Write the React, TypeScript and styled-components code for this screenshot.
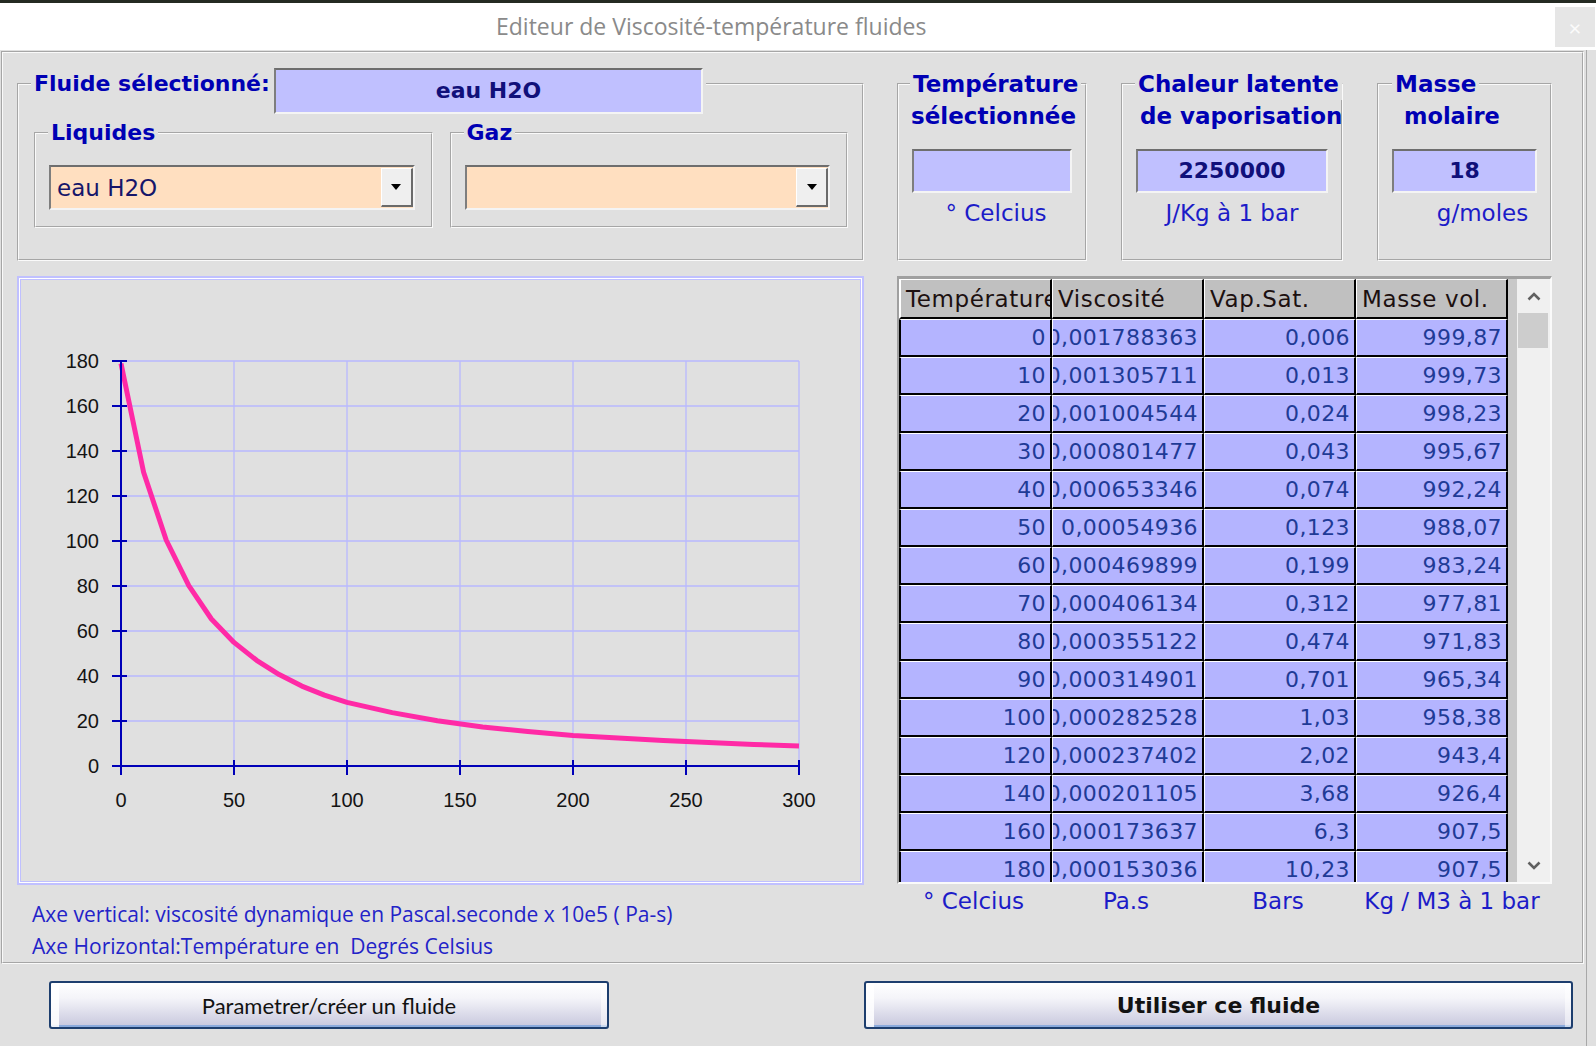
import React from "react";
import styled, { createGlobalStyle } from "styled-components";

const GlobalStyle = createGlobalStyle`
  html, body {
    margin: 0;
    padding: 0;
    background: #e0e0e0;
  }
  body {
    width: 1596px;
    height: 1046px;
    overflow: hidden;
    font-family: "DejaVu Sans", "Liberation Sans", sans-serif;
  }
  * {
    box-sizing: border-box;
  }
`;

const ui = `"Lato", "Open Sans", sans-serif`;
const open = `"Open Sans", "Lato", sans-serif`;
const dv = `"DejaVu Sans", "Liberation Sans", sans-serif`;

const Window = styled.div`
  width: 1596px;
  height: 1046px;
  display: flex;
  flex-direction: column;
  background: #e0e0e0;
`;

const TopStrip = styled.div`
  height: 3px;
  background: #242a22;
`;

const TitleBar = styled.header`
  height: 47px;
  display: flex;
  align-items: flex-start;
  background: #ffffff;
`;

const Title = styled.h1`
  flex: 1;
  margin: 0;
  padding-left: 496px;
  font: 400 23px/47px ${open};
  color: #8a8a8a;
`;

const CloseButton = styled.div`
  width: 40px;
  height: 40px;
  margin: 4px 1px 0 0;
  display: flex;
  align-items: center;
  justify-content: center;
  background: #e6e6e6;
  color: #fbfbfb;
  font: 22px ${ui};
`;

const Client = styled.div`
  flex: 1;
  background: linear-gradient(90deg, transparent 1586px, #a8a8a8 1586px, #a8a8a8 1587px, transparent 1587px);
`;

const Panel = styled.main`
  height: 913px;
  margin: 1px 12px 0 1px;
  padding: 15px 30px 0 14px;
  border: 2px groove #fafafa;
  background: #e0e0e0;
  display: grid;
  grid-template-columns: 847px 655px;
  grid-template-rows: 193px 609px auto;
  column-gap: 33px;
  row-gap: 15px;
`;

const Frame = styled.fieldset<{ $w?: number; $h: number; $pad?: string }>`
  margin: 0;
  min-width: 0;
  height: ${(p) => p.$h}px;
  ${(p) => (p.$w ? `width: ${p.$w}px; flex: none;` : "flex: 1;")}
  padding: ${(p) => p.$pad ?? "0 13px"};
  border: 2px groove #fafafa;
  display: flex;
  flex-direction: column;
`;

const Legend = styled.legend<{ $shift?: number; $size?: number }>`
  padding: 0 3px;
  margin-left: ${(p) => p.$shift ?? 0}px;
  font: bold ${(p) => p.$size ?? 22}px/32px ${dv};
  color: #0000b4;
  white-space: pre;
`;

const FluideLegend = styled(Legend)`
  display: flex;
  align-items: flex-start;
`;

const FluideLabel = styled.span`
  width: 240px;
`;

const SecondLine = styled.div<{ $indent: number; $size?: number }>`
  margin-left: ${(p) => p.$indent - 15}px;
  font: bold ${(p) => p.$size ?? 22}px/32px ${dv};
  color: #0000b4;
  white-space: pre;
`;

const ValueField = styled.div<{ $w?: number; $h: number }>`
  ${(p) => (p.$w ? `width: ${p.$w}px;` : "")}
  height: ${(p) => p.$h}px;
  background: #c0c0ff;
  border-style: solid;
  border-width: 2px;
  border-color: #6e6e6e #f4f4f4 #f4f4f4 #7e7e7e;
  font: bold 22px/${(p) => p.$h - 4}px ${dv};
  color: #10107a;
  text-align: center;
`;

const HeaderField = styled(ValueField)`
  margin-bottom: -14px;
`;

const InputField = styled(ValueField)`
  margin-top: 17px;
`;

const Unit = styled.div<{ $shift?: number }>`
  margin-top: 5px;
  padding-left: ${(p) => p.$shift ?? 0}px;
  font: 23px/30px ${dv};
  color: #1c1cc8;
  text-align: center;
  white-space: nowrap;
`;

const SubRow = styled.div`
  display: flex;
  gap: 17px;
`;

const Combo = styled.div`
  height: 45px;
  padding: 1px 0;
  display: flex;
  align-items: center;
  background: #ffdfc0;
  border-style: solid;
  border-width: 2px;
  border-color: #6e6e6e #f4f4f4 #f4f4f4 #7e7e7e;
`;

const ComboText = styled.span`
  flex: 1;
  padding-left: 6px;
  font: 23px ${dv};
  color: #16166a;
`;

const DropButton = styled.div`
  width: 32px;
  height: 39px;
  display: flex;
  align-items: center;
  justify-content: center;
  background: #efefef;
  border-top: 1px solid #ffffff;
  border-left: 1px solid #ffffff;
  border-right: 2px solid #6a6a6a;
  border-bottom: 2px solid #6a6a6a;
`;

const RightFrames = styled.div`
  display: flex;
  gap: 34px;
`;

const ChartFrame = styled.div`
  border: 2px solid #c0c0ff;
  box-shadow: inset 0 0 0 1px #ffffff, inset 0 0 0 2px #c0c0ff;
`;

const TableBox = styled.div`
  height: 608px;
  display: flex;
  border-style: solid;
  border-width: 3px 2px 2px 2px;
  border-color: #a0a0a0 #fafafa #fafafa #a0a0a0;
  overflow: hidden;
`;

const GridArea = styled.div`
  flex: 1;
  background: #c8c8c8;
  overflow: hidden;
`;

const GridRow = styled.div<{ $head?: boolean }>`
  display: grid;
  grid-template-columns: 153px 152px 152px 152px;
  height: ${(p) => (p.$head ? 40 : 38)}px;
`;

const Cell = styled.div<{ $head?: boolean; $first?: boolean }>`
  display: flex;
  align-items: center;
  justify-content: ${(p) => (p.$head ? "flex-start" : "flex-end")};
  overflow: hidden;
  white-space: pre;
  padding: ${(p) => (p.$head ? "0 0 0 5px" : "0 4px 0 0")};
  background: ${(p) => (p.$head ? "#c0c0c0" : "#b4b4ff")};
  border-top: 1px solid #ffffff;
  border-left: ${(p) =>
    p.$first ? (p.$head ? "2px solid #ffffff" : "2px solid #000000") : "1px solid #ffffff"};
  border-right: 2px solid #000000;
  border-bottom: 2px solid #000000;
  font: ${(p) => (p.$head ? "23px" : "22px")} ${dv};
  letter-spacing: ${(p) => (p.$head ? "0.6px" : "0.4px")};
  color: ${(p) => (p.$head ? "#1c1010" : "#1f3b96")};
`;

const Scrollbar = styled.div`
  width: 33px;
  display: flex;
  flex-direction: column;
  background: #f0f0f0;
`;

const ScrollArrow = styled.div`
  height: 34px;
  display: flex;
  align-items: center;
  justify-content: center;
`;

const ScrollThumb = styled.div`
  height: 35px;
  margin: 0 2px 0 1px;
  background: #cdcdcd;
`;

const ScrollTrack = styled.div`
  flex: 1;
`;

const Notes = styled.div`
  margin-top: -2px;
  padding-left: 15px;
  font: 21px/32px ${open};
  color: #2323c8;
  white-space: pre;
`;

const Units = styled.div`
  display: grid;
  grid-template-columns: 153px 152px 152px 196px;
  margin-top: -14px;
`;

const UnitCell = styled.div`
  font: 23px/30px ${dv};
  color: #1c1cc8;
  text-align: center;
  white-space: nowrap;
`;

const ButtonRow = styled.footer`
  display: flex;
  padding: 17px 0 0 49px;
  gap: 255px;
`;

const Button = styled.button<{ $w: number; $bold?: boolean }>`
  width: ${(p) => p.$w}px;
  height: 48px;
  padding: 0;
  border: 2px solid #1d3e6e;
  border-radius: 3px;
  background: linear-gradient(#ffffff 0%, #f4f4f9 35%, #c7c7dd 100%);
  box-shadow: inset 9px 0 0 -1px rgba(255, 255, 255, 0.85),
    inset -7px 0 0 -1px rgba(255, 255, 255, 0.55), inset 0 -2px 0 #8aaadc;
  font: ${(p) => (p.$bold ? `bold 22px ${dv}` : `400 22px ${ui}`)};
  color: #121212;
`;

const rows: string[][] = [
  ["0", "0,001788363", "0,006", "999,87"],
  ["10", "0,001305711", "0,013", "999,73"],
  ["20", "0,001004544", "0,024", "998,23"],
  ["30", "0,000801477", "0,043", "995,67"],
  ["40", "0,000653346", "0,074", "992,24"],
  ["50", " 0,00054936", "0,123", "988,07"],
  ["60", "0,000469899", "0,199", "983,24"],
  ["70", "0,000406134", "0,312", "977,81"],
  ["80", "0,000355122", "0,474", "971,83"],
  ["90", "0,000314901", "0,701", "965,34"],
  ["100", "0,000282528", "1,03", "958,38"],
  ["120", "0,000237402", "2,02", "943,4"],
  ["140", "0,000201105", "3,68", "926,4"],
  ["160", "0,000173637", "6,3", "907,5"],
  ["180", "0,000153036", "10,23", "907,5"],
];

const headers = ["Température", "Viscosité", "Vap.Sat.", "Masse vol."];

// viscosity x 1e5 against temperature, last points extend the table
const curve: [number, number][] = [
  ...rows.map((r) => [Number(r[0]), Number(r[1].trim().replace(",", ".")) * 1e5] as [number, number]),
  [200, 13.6],
  [220, 12.4],
  [240, 11.3],
  [260, 10.4],
  [280, 9.6],
  [300, 8.9],
];

const X0 = 102;
const Y0 = 488;
const px = (t: number) => X0 + t * (678 / 300);
const py = (v: number) => Y0 - v * 2.25;

const Chart = () => {
  const yTicks = [0, 20, 40, 60, 80, 100, 120, 140, 160, 180];
  const xTicks = [0, 50, 100, 150, 200, 250, 300];
  const path = curve.map(([t, v], i) => `${i ? "L" : "M"}${px(t).toFixed(1)},${py(v).toFixed(1)}`).join(" ");
  return (
    <svg width="843" height="605" viewBox="0 0 843 605" style={{ display: "block" }}>
      <g stroke="#b8b8ff" strokeWidth="1.3">
        {xTicks.slice(1).map((t) => (
          <line key={t} x1={px(t)} y1={py(180)} x2={px(t)} y2={Y0} />
        ))}
        {yTicks.slice(1).map((v) => (
          <line key={v} x1={X0} y1={py(v)} x2={px(300)} y2={py(v)} />
        ))}
      </g>
      <path d={path} fill="none" stroke="#ff2aa6" strokeWidth="5" strokeLinejoin="round" />
      <g stroke="#0000b8" strokeWidth="2">
        <line x1={X0} y1={py(180)} x2={X0} y2={Y0} />
        <line x1={X0} y1={Y0} x2={px(300)} y2={Y0} />
        {yTicks.map((v) => (
          <line key={v} x1={93} y1={py(v)} x2={108} y2={py(v)} />
        ))}
        {xTicks.map((t) => (
          <line key={t} x1={px(t)} y1={482} x2={px(t)} y2={497} />
        ))}
      </g>
      <g fontFamily='"Liberation Sans", Arial, sans-serif' fontSize="20" fill="#141414">
        {yTicks.map((v) => (
          <text key={v} x={80} y={py(v) + 7} textAnchor="end">
            {v}
          </text>
        ))}
        {xTicks.map((t) => (
          <text key={t} x={px(t)} y={529} textAnchor="middle">
            {t}
          </text>
        ))}
      </g>
    </svg>
  );
};

const Triangle = () => (
  <svg width="10" height="6" viewBox="0 0 10 6">
    <polygon points="0,0 10,0 5,6" fill="#000" />
  </svg>
);

const Chevron = ({ up }: { up?: boolean }) => (
  <svg width="14" height="9" viewBox="0 0 14 9">
    <polyline
      points={up ? "1.5,7.5 7,2 12.5,7.5" : "1.5,1.5 7,7 12.5,1.5"}
      fill="none"
      stroke="#606060"
      strokeWidth="2.6"
    />
  </svg>
);

export default function App() {
  return (
    <>
      <GlobalStyle />
      <Window>
        <TopStrip />
        <TitleBar>
          <Title>Editeur de Viscosité-température fluides</Title>
          <CloseButton>×</CloseButton>
        </TitleBar>
        <Client>
          <Panel>
            <Frame $h={193} $pad="17px 14px 0 15px">
              <FluideLegend $shift={-3}>
                <FluideLabel>Fluide sélectionné:</FluideLabel>
                <HeaderField $w={429} $h={46}>
                  eau H2O
                </HeaderField>
              </FluideLegend>
              <SubRow>
                <Frame $h={111} $pad="16px 16px 0 13px">
                  <Legend $shift={-1}>Liquides</Legend>
                  <Combo>
                    <ComboText>eau H2O</ComboText>
                    <DropButton>
                      <Triangle />
                    </DropButton>
                  </Combo>
                </Frame>
                <Frame $h={111} $pad="16px 16px 0 13px">
                  <Legend $shift={-1}>Gaz</Legend>
                  <Combo>
                    <ComboText />
                    <DropButton>
                      <Triangle />
                    </DropButton>
                  </Combo>
                </Frame>
              </SubRow>
            </Frame>

            <RightFrames>
              <Frame $w={190} $h={193}>
                <Legend $shift={-2} $size={23}>
                  Température
                </Legend>
                <SecondLine $indent={14} $size={23}>
                  sélectionnée
                </SecondLine>
                <InputField $h={44} />
                <Unit $shift={8}>° Celcius</Unit>
              </Frame>
              <Frame $w={222} $h={193}>
                <Legend $shift={-1} $size={23}>
                  Chaleur latente
                </Legend>
                <SecondLine $indent={19} $size={23}>
                  de vaporisation
                </SecondLine>
                <InputField $h={44}>2250000</InputField>
                <Unit>J/Kg à 1 bar</Unit>
              </Frame>
              <Frame $w={175} $h={193}>
                <Legend $shift={0} $size={23}>
                  Masse
                </Legend>
                <SecondLine $indent={27} $size={22.5}>
                  molaire
                </SecondLine>
                <InputField $h={44}>18</InputField>
                <Unit $shift={36}>g/moles</Unit>
              </Frame>
            </RightFrames>

            <ChartFrame>
              <Chart />
            </ChartFrame>

            <TableBox>
              <GridArea>
                <GridRow $head>
                  {headers.map((h, i) => (
                    <Cell key={h} $head $first={i === 0}>
                      {h}
                    </Cell>
                  ))}
                </GridRow>
                {rows.map((r) => (
                  <GridRow key={r[0]}>
                    {r.map((c, i) => (
                      <Cell key={i} $first={i === 0}>
                        {c}
                      </Cell>
                    ))}
                  </GridRow>
                ))}
              </GridArea>
              <Scrollbar>
                <ScrollArrow>
                  <Chevron up />
                </ScrollArrow>
                <ScrollThumb />
                <ScrollTrack />
                <ScrollArrow>
                  <Chevron />
                </ScrollArrow>
              </Scrollbar>
            </TableBox>

            <Notes>
              {"Axe vertical: viscosité dynamique en Pascal.seconde x 10e5 ( Pa-s)\nAxe Horizontal:Température en  Degrés Celsius"}
            </Notes>

            <Units>
              <UnitCell>° Celcius</UnitCell>
              <UnitCell>Pa.s</UnitCell>
              <UnitCell>Bars</UnitCell>
              <UnitCell>Kg / M3 à 1 bar</UnitCell>
            </Units>
          </Panel>
          <ButtonRow>
            <Button $w={560}>Parametrer/créer un fluide</Button>
            <Button $w={709} $bold>
              Utiliser ce fluide
            </Button>
          </ButtonRow>
        </Client>
      </Window>
    </>
  );
}
